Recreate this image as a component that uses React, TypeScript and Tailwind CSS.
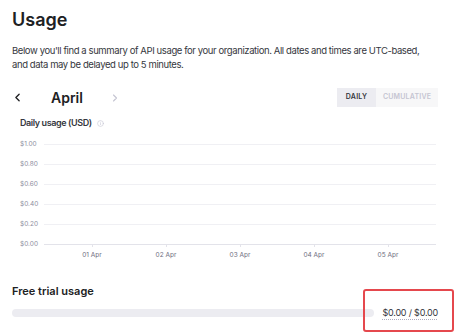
import React from 'react';
import { ChevronLeft, ChevronRight, Info } from 'lucide-react';

const yTicks = ['$1.00', '$0.80', '$0.60', '$0.40', '$0.20', '$0.00'];
const days = ['01 Apr', '02 Apr', '03 Apr', '04 Apr', '05 Apr'];

export default function App() {
  return (
    <div className="w-[474px] h-[336px] bg-white overflow-hidden relative font-['Inter',sans-serif] text-[#202123]">
      <div className="pl-3 pr-[36px] pt-[8px]">
        {/* Title */}
        <h1 className="text-[18px] font-semibold leading-[24px]">Usage</h1>
        <p className="mt-[12px] text-[9.5px] leading-[14px] tracking-[-0.4px] text-[#353740] whitespace-nowrap">
          Below you'll find a summary of API usage for your organization. All dates and times are UTC-based,
          <br />
          and data may be delayed up to 5 minutes.
        </p>

        {/* Month nav + toggle */}
        <div className="mt-[16px] flex items-center h-[19px]">
          <ChevronLeft className="w-[13px] h-[13px] -ml-[1px] text-[#202123]" strokeWidth={2.5} />
          <span className="ml-[27px] text-[14px] font-semibold leading-none">April</span>
          <ChevronRight className="w-[12px] h-[12px] ml-[26px] text-[#c5c5d2]" strokeWidth={2.2} />
          <div className="ml-auto flex h-[19px] text-[7px] font-semibold tracking-[0.2px] uppercase">
            <div className="flex items-center justify-center w-[39px] bg-[#ececf1] text-[#353740]">Daily</div>
            <div className="flex items-center justify-center w-[62px] bg-[#f7f7f8] text-[#c5c5d2]">Cumulative</div>
          </div>
        </div>

        {/* Chart */}
        <div className="ml-2 mr-[2px] mt-[9px]">
          <div className="flex items-center gap-[5px] h-[14px]">
            <span className="text-[9px] font-semibold tracking-[-0.4px] text-[#353740]">Daily usage (USD)</span>
            <Info className="w-[7px] h-[7px] text-[#c5c5d2]" strokeWidth={2} />
          </div>
          <div className="mt-[4px] flex flex-col">
            {yTicks.map((t, i) => (
              <div key={t} className="flex items-center h-[20px]">
                <span className="w-[24px] text-[6.5px] text-[#8e8ea0] leading-none">{t}</span>
                <div className={`flex-1 h-px ${i === yTicks.length - 1 ? 'bg-[#e3e3ea]' : 'bg-[#f0f0f4]'}`} />
              </div>
            ))}
          </div>
          <div className="ml-[24px] -mt-[10px] px-[11px] flex">
            {days.map((d) => (
              <div key={d} className="flex-1 flex flex-col items-center">
                <div className="w-px h-[3px] bg-[#e3e3ea]" />
                <span className="mt-[5px] text-[6.5px] text-[#6e6e80] leading-none">{d}</span>
              </div>
            ))}
          </div>
        </div>

        {/* Free trial usage */}
        <div className="mt-[24px]">
          <h2 className="text-[11px] font-semibold leading-[16px]">Free trial usage</h2>
          <div className="mt-[7px] flex items-center gap-2 h-[14px]">
            <div className="flex-1 h-[8px] rounded-full bg-[#ececf1]" />
            <span className="text-[9px] tracking-[-0.2px] text-[#353740] leading-none underline decoration-dotted decoration-[#acacbe] underline-offset-[3px]">
              $0.00 / $0.00
            </span>
          </div>
        </div>
      </div>

      {/* Annotation box */}
      <div className="absolute left-[363px] top-[289px] w-[91px] h-[43px] border-2 border-[#e5484d] rounded-[3px]" />
    </div>
  );
}
